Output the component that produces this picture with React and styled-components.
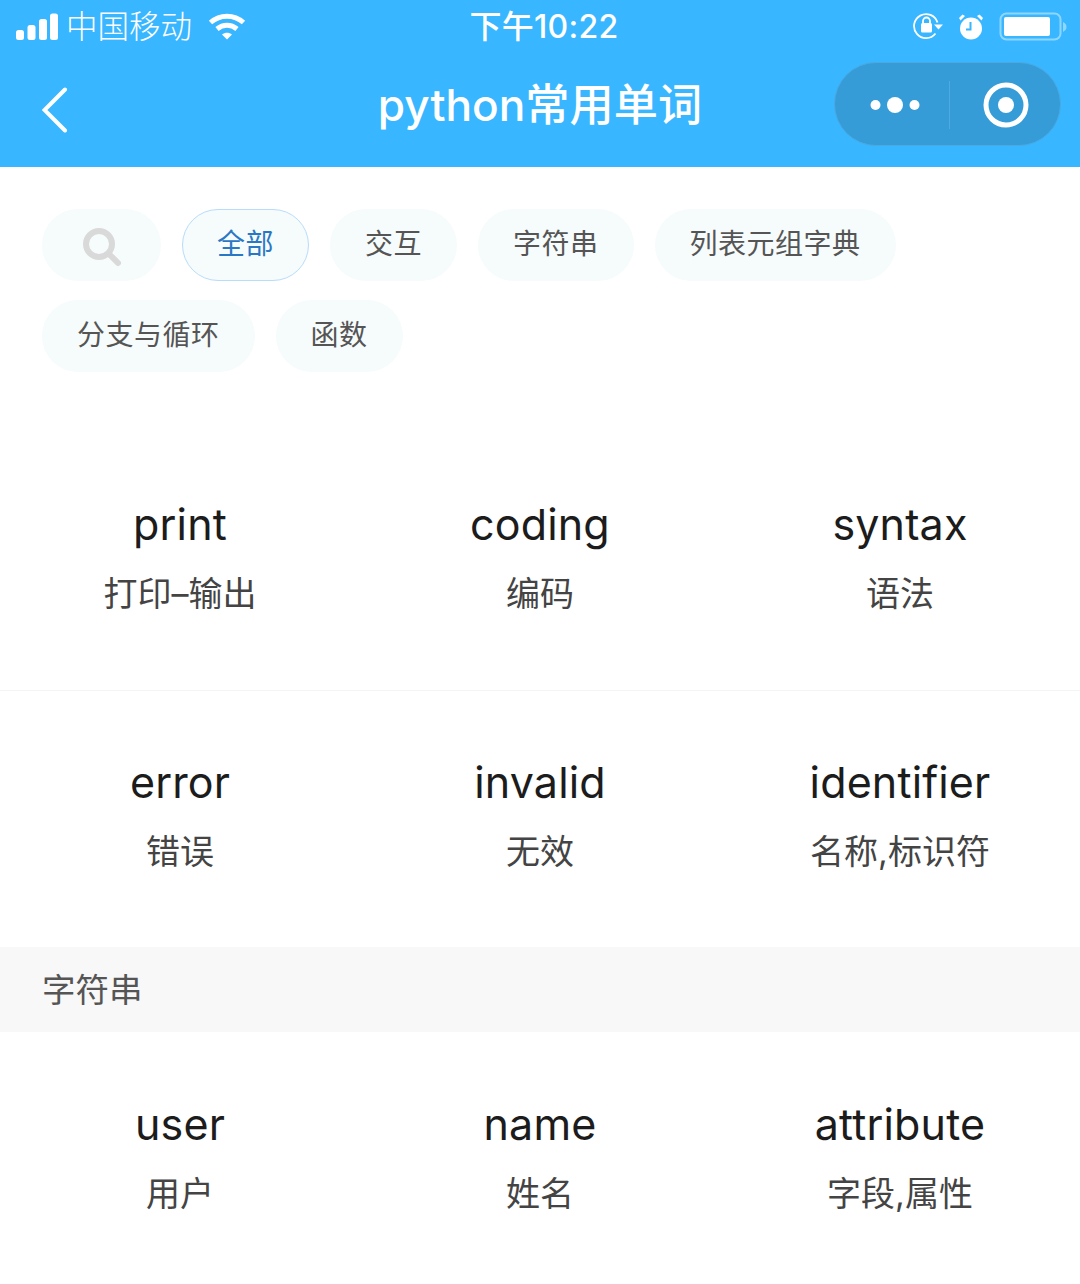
import React from 'react';
import styled, { createGlobalStyle } from 'styled-components';

const GlobalStyle = createGlobalStyle`
    body {
        margin: 0;
        background: #fff;
        font-family: Inter, "Noto Sans CJK SC", sans-serif;
    }
`;

const Page = styled.div`
    width: 1080px;
    height: 1284px;
    overflow: hidden;
`;

const Header = styled.header`
    height: 167px;
    background: #38b6ff;
    color: #fff;
    box-sizing: border-box;
`;

const StatusBar = styled.div`
    height: 54px;
    padding: 0 13px 0 15px;
    display: flex;
    align-items: center;
    position: relative;
`;

const Carrier = styled.span`
    font-size: 31.5px;
    font-weight: 300;
    margin-left: 7px;
    margin-right: 16px;
    line-height: 54px;
`;

const Clock = styled.span`
    position: absolute;
    left: 8px;
    right: 0;
    text-align: center;
    font-size: 32px;
    font-weight: 500;
    letter-spacing: 0.3px;
    line-height: 54px;
`;

const StatusRight = styled.div`
    margin-left: auto;
    display: flex;
    align-items: center;
    gap: 15px;
`;

const NavBar = styled.div`
    height: 113px;
    padding: 9px 19px 0 42px;
    box-sizing: border-box;
    display: flex;
    align-items: flex-start;
    position: relative;
`;

const NavTitle = styled.h1`
    position: absolute;
    left: 0;
    right: 0;
    top: 0;
    margin: 0;
    text-align: center;
    font-size: 44.2px;
    font-weight: 500;
    line-height: 102px;
`;

const BackButton = styled.div`
    margin-top: 24px;
    height: 46px;
    display: flex;
`;

const Capsule = styled.div`
    margin-left: auto;
    margin-top: -1px;
    width: 227px;
    height: 84px;
    padding-top: 1px;
    box-sizing: border-box;
    border-radius: 42px;
    background: #359cd8;
    border: 1px solid #4aa9e2;
    display: flex;
    align-items: center;
`;

const CapsuleCell = styled.div`
    flex: 1 1 0;
    box-sizing: border-box;
    padding-left: ${props => props.$shift}px;
    height: 100%;
    display: flex;
    align-items: center;
    justify-content: center;
`;

const CapsuleLine = styled.div`
    width: 1px;
    height: 48px;
    background: #4eaae2;
`;

const Tags = styled.div`
    display: flex;
    flex-wrap: wrap;
    gap: 19px 21px;
    padding: 42px 42px 0;
    height: 265px;
    box-sizing: border-box;
    align-content: flex-start;
`;

const Tag = styled.div`
    height: 72px;
    box-sizing: border-box;
    padding: 0 34px 7px;
    border-radius: 36px;
    background: #f6fbfb;
    border: 1px solid ${props => (props.$active ? '#b8dcfb' : 'transparent')};
    color: ${props => (props.$active ? '#2a77c4' : '#555')};
    font-size: 28px;
    letter-spacing: 0.5px;
    white-space: nowrap;
    display: flex;
    align-items: center;
`;

const SearchTag = styled(Tag)`
    width: 119px;
    padding: 6px 0 0;
    justify-content: center;
`;

const WordRow = styled.div`
    display: grid;
    grid-template-columns: repeat(3, 360px);
    height: ${props => props.$height}px;
    box-sizing: border-box;
    padding-top: ${props => props.$top}px;
    border-bottom: ${props => (props.$line ? '1px solid #f3f4f4' : 'none')};
`;

const WordCell = styled.div`
    text-align: center;
`;

const Word = styled.div`
    font-size: 43px;
    letter-spacing: 0.15px;
    line-height: 60px;
    color: #1c1c1c;
`;

const Meaning = styled.div`
    font-size: 34px;
    line-height: 48px;
    margin-top: 16px;
    color: #444;
`;

const SectionTitle = styled.div`
    height: 85px;
    background: #f8f8f8;
    padding-left: 42px;
    font-size: 33.5px;
    line-height: 86px;
    color: #555;
`;

const SignalIcon = () => (
    <svg width="44" height="28" viewBox="0 0 44 28" fill="#fff">
        <rect x="1" y="17" width="8" height="10" rx="2.5" />
        <rect x="12.500" y="12" width="8" height="15" rx="2.5" />
        <rect x="24" y="6" width="8" height="21" rx="2.5" />
        <rect x="35" y="0.500" width="8" height="26.500" rx="2.500" />
    </svg>
);

const WifiIcon = () => (
    <svg width="38" height="28" viewBox="0 0 38 28" fill="none" stroke="#fff" strokeWidth="5">
        <path d="M2.500 9.500 C12 1 26 1 35.500 9.500" />
        <path d="M9 16 C15 11 23 11 29 16" />
        <path d="M14 21.500 L19 26.500 L24 21.500 C21 19 17 19 14 21.500 Z" fill="#fff" stroke="none" />
    </svg>
);

const RotationLockIcon = () => (
    <svg width="30" height="28" viewBox="0 0 30 28" fill="none">
        <path d="M24.500 9.500 A12 12 0 1 0 22.500 20.500" stroke="#fff" strokeWidth="1.800" />
        <path d="M21 11.500 L30 11.500 L25.500 16.500 Z" fill="#fff" />
        <rect x="8" y="10" width="11" height="9.500" rx="1.500" fill="#fff" />
        <path d="M10 10.500 V8 a3.500 3.500 0 0 1 7 0 V10.500" stroke="#fff" strokeWidth="1.800" />
    </svg>
);

const AlarmIcon = () => (
    <svg width="26" height="28" viewBox="0 0 26 28" fill="#fff">
        <circle cx="13" cy="15.500" r="11" />
        <path d="M1 5 L4.500 1.500 L7 3 L2.500 7.500 Z" />
        <path d="M25 5 L21.500 1.500 L19 3 L23.500 7.500 Z" />
        <path d="M12.500 9 V16.500 H8" fill="none" stroke="#38b6ff" strokeWidth="2" />
    </svg>
);

const BatteryIcon = () => (
    <svg width="68" height="30" viewBox="0 0 68 30">
        <rect x="1.500" y="1.500" width="60" height="26" rx="6" fill="none" stroke="#8fd6ff" strokeWidth="2" />
        <rect x="5" y="5" width="46" height="19" rx="2" fill="#fff" />
        <path d="M64 10 C66.500 11 67.500 13 67.500 15 C67.500 17 66.500 18.500 64 20 Z" fill="#8fd6ff" />
    </svg>
);

const BackIcon = () => (
    <svg width="26" height="46" viewBox="0 0 26 46" fill="none" stroke="#fff" strokeWidth="4" strokeLinecap="round">
        <path d="M23 2.500 L2.500 23 L23 43.500" />
    </svg>
);

const MoreIcon = () => (
    <svg width="50" height="18" viewBox="0 0 50 18" fill="#fff">
        <circle cx="5.500" cy="9" r="5" />
        <circle cx="25" cy="9" r="8" />
        <circle cx="44.500" cy="9" r="5" />
    </svg>
);

const RecordIcon = () => (
    <svg width="46" height="46" viewBox="0 0 46 46" fill="none">
        <circle cx="23" cy="23" r="20" stroke="#fff" strokeWidth="5" />
        <circle cx="23" cy="23" r="8" fill="#fff" />
    </svg>
);

const SearchIcon = () => (
    <svg width="40" height="40" viewBox="0 0 40 40" fill="none" stroke="#d9d9d9" strokeLinecap="round">
        <circle cx="17" cy="16" r="13" strokeWidth="6" />
        <path d="M28 27 L36 35" strokeWidth="6" />
    </svg>
);

const tags = ['全部', '交互', '字符串', '列表元组字典', '分支与循环', '函数'];

const rows = [
    {
        height: 259,
        top: 62,
        line: true,
        words: [['print', '打印–输出'], ['coding', '编码'], ['syntax', '语法']],
    },
    {
        height: 256,
        top: 61,
        words: [['error', '错误'], ['invalid', '无效'], ['identifier', '名称,标识符']],
    },
];

const stringWords = [['user', '用户'], ['name', '姓名'], ['attribute', '字段,属性']];

const WordLine = ({ row }) => (
    <WordRow $height={row.height} $top={row.top} $line={row.line}>
        {row.words.map(([en, zh]) => (
            <WordCell key={en}>
                <Word>{en}</Word>
                <Meaning>{zh}</Meaning>
            </WordCell>
        ))}
    </WordRow>
);

export default function App() {
    return (
        <Page>
            <GlobalStyle />
            <Header>
                <StatusBar>
                    <SignalIcon />
                    <Carrier>中国移动</Carrier>
                    <WifiIcon />
                    <Clock>下午10:22</Clock>
                    <StatusRight>
                        <RotationLockIcon />
                        <AlarmIcon />
                        <BatteryIcon />
                    </StatusRight>
                </StatusBar>
                <NavBar>
                    <NavTitle>python常用单词</NavTitle>
                    <BackButton><BackIcon /></BackButton>
                    <Capsule>
                        <CapsuleCell $shift={6}><MoreIcon /></CapsuleCell>
                        <CapsuleLine />
                        <CapsuleCell $shift={2}><RecordIcon /></CapsuleCell>
                    </Capsule>
                </NavBar>
            </Header>
            <Tags>
                <SearchTag><SearchIcon /></SearchTag>
                {tags.map((t, i) => (
                    <Tag key={t} $active={i === 0}>{t}</Tag>
                ))}
            </Tags>
            {rows.map(row => <WordLine key={row.words[0][0]} row={row} />)}
            <SectionTitle>字符串</SectionTitle>
            <WordLine row={{ height: 252, top: 62, words: stringWords }} />
        </Page>
    );
}
